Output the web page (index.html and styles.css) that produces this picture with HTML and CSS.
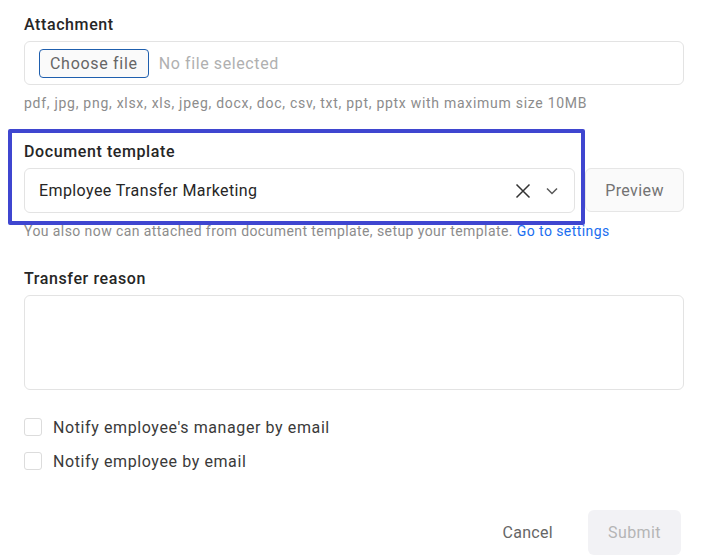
FILE: index.html
```html
<!DOCTYPE html>
<html lang="en">
<head>
  <meta charset="UTF-8">
  <meta name="viewport" content="width=device-width, initial-scale=1.0">
  <title>Employee transfer</title>
  <link rel="stylesheet" href="styles.css">
</head>
<body>
  <form class="form-transfer">
    <div class="camp camp-atasament">
      <label class="eticheta">Attachment</label>
      <div class="input-fisier">
        <span class="btn-fisier">Choose file</span>
        <span class="fisier-gol">No file selected</span>
      </div>
      <div class="ajutor">pdf, jpg, png, xlsx, xls, jpeg, docx, doc, csv, txt, ppt, pptx with maximum size 10MB</div>
    </div>

    <div class="camp camp-template">
      <div class="evidentiere"></div>
      <label class="eticheta">Document template</label>
      <div class="rand-template">
        <div class="select-template">
          <span class="valoare">Employee Transfer Marketing</span>
          <svg class="icon-sterge" width="16" height="16" viewBox="0 0 16 16"><path d="M1.5 1.5 L14.5 14.5 M14.5 1.5 L1.5 14.5" stroke="#333" stroke-width="1.5" fill="none"/></svg>
          <svg class="icon-sageata" width="14" height="14" viewBox="0 0 14 14"><path d="M2 4.5 L7 9.5 L12 4.5" stroke="#595959" stroke-width="1.5" fill="none"/></svg>
        </div>
        <button type="button" class="btn-preview">Preview</button>
      </div>
      <div class="ajutor ajutor-template">You also now can attached from document template, setup your template. <a href="#" class="link-setari">Go to settings</a></div>
    </div>

    <div class="camp">
      <label class="eticheta">Transfer reason</label>
      <div class="textarea-motiv"></div>
    </div>

    <div class="lista-notificari">
      <label class="rand-bifa"><span class="bifa"></span>Notify employee's manager by email</label>
      <label class="rand-bifa"><span class="bifa"></span>Notify employee by email</label>
    </div>

    <div class="actiuni">
      <button type="button" class="btn-anuleaza">Cancel</button>
      <button type="button" class="btn-trimite">Submit</button>
    </div>
  </form>
</body>
</html>
```

FILE: styles.css
```css
body {
  margin: 0;
  font-family: Roboto, "Liberation Sans", sans-serif;
  background: #ffffff;
  color: #262626;
  letter-spacing: 0.6px;
}
.form-transfer {
  padding: 13px 23px 0 24px;
}
.camp {
  position: relative;
  margin-bottom: 27px;
}
.camp-template {
  margin-bottom: 26px;
}
.eticheta {
  display: block;
  font-size: 16px;
  font-weight: 500;
  line-height: 24px;
  color: #262626;
  margin-bottom: 4px;
}
.input-fisier {
  height: 44px;
  box-sizing: border-box;
  border: 1px solid #e3e3e3;
  border-radius: 6px;
  display: flex;
  align-items: center;
  padding: 0 14px;
  gap: 10px;
}
.btn-fisier {
  height: 29px;
  box-sizing: border-box;
  border: 1px solid #1f5fae;
  border-radius: 4px;
  padding: 0 10px;
  display: flex;
  align-items: center;
  font-size: 16px;
  color: #666;
  background: #fafafa;
  letter-spacing: 0.7px;
}
.fisier-gol {
  font-size: 16px;
  color: #b0b0b0;
}
.ajutor {
  margin-top: 8px;
  font-size: 14px;
  line-height: 20px;
  color: #8c8c8c;
  letter-spacing: 0.72px;
}
.ajutor-template {
  letter-spacing: 0.42px;
}
.link-setari {
  color: #1a6ef0;
  text-decoration: none;
}
.evidentiere {
  position: absolute;
  left: -16px;
  top: -11px;
  width: 577px;
  height: 96px;
  box-sizing: border-box;
  border: 4px solid #3f46d0;
  border-radius: 2px;
  pointer-events: none;
}
.rand-template {
  display: flex;
  gap: 10px;
}
.select-template {
  width: 551px;
  height: 45px;
  box-sizing: border-box;
  border: 1px solid #e3e3e3;
  border-radius: 6px;
  display: flex;
  align-items: center;
  padding: 0 15px 0 14px;
}
.valoare {
  flex: 1;
  font-size: 16px;
  color: #262626;
  letter-spacing: 0.4px;
}
.icon-sterge {
  margin-right: 14px;
}
.btn-preview {
  flex: 1;
  height: 44px;
  border: 1px solid #e6e6e6;
  border-radius: 6px;
  background: #fafafa;
  font-family: inherit;
  font-size: 16px;
  color: #737373;
  letter-spacing: 0.4px;
}
.textarea-motiv {
  height: 95px;
  box-sizing: border-box;
  border: 1px solid #e3e3e3;
  border-radius: 6px;
}
.lista-notificari {
  margin-top: -2px;
  display: flex;
  flex-direction: column;
  gap: 10px;
}
.rand-bifa {
  display: flex;
  align-items: center;
  height: 24px;
  font-size: 16px;
  color: #3a3a3a;
}
.bifa {
  width: 18px;
  height: 18px;
  box-sizing: border-box;
  border: 1px solid #dcdcdc;
  border-radius: 3px;
  margin-right: 11px;
}
.actiuni {
  margin-top: 37px;
  display: flex;
  justify-content: flex-end;
  gap: 19px;
  padding-right: 3px;
}
.btn-anuleaza {
  height: 45px;
  border: none;
  background: none;
  font-family: inherit;
  font-size: 16px;
  color: #666;
  padding: 0 16px;
  letter-spacing: 0.3px;
}
.btn-trimite {
  width: 93px;
  height: 45px;
  border: none;
  border-radius: 6px;
  background: #f2f2f5;
  font-family: inherit;
  font-size: 16px;
  color: #b5b5b5;
  letter-spacing: 0.4px;
}
```
